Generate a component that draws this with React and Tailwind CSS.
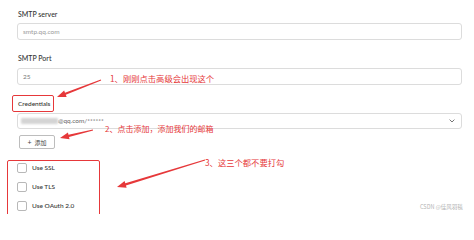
import React from "react";

function Arrow({ x1, y1, x2, y2 }) {
  const dx = x2 - x1;
  const dy = y2 - y1;
  const len = Math.sqrt(dx * dx + dy * dy);
  const ux = dx / len;
  const uy = dy / len;
  const px = -uy;
  const py = ux;
  const hl = 9;
  const hw = 3.5;
  const bx = x2 - ux * hl;
  const by = y2 - uy * hl;
  const tail = `${x1 + px * 0.5},${y1 + py * 0.5} ${bx + px * 1.1},${by + py * 1.1} ${bx + px * hw},${by + py * hw} ${x2},${y2} ${bx - px * hw},${by - py * hw} ${bx - px * 1.1},${by - py * 1.1} ${x1 - px * 0.5},${y1 - py * 0.5}`;
  return <polygon points={tail} fill="#e6383a" />;
}

export default function App() {
  return (
    <div className="relative w-[474px] h-[214px] overflow-hidden bg-white font-['Lato',sans-serif] text-[#333]">
      <div className="flex flex-col pl-[17px] pr-[12px] pt-[10px]">
        <div className="h-[8px] pl-[1px] text-[7px] leading-[8px] font-medium">SMTP server</div>
        <div className="mt-[5px] flex h-[17px] items-center rounded-[3px] border border-[#dcdcdc] pl-[5px] text-[6.5px] text-[#9a9a9a]">
          smtp.qq.com
        </div>
        <div className="mt-[14px] h-[8px] pl-[1px] text-[7px] leading-[8px] font-medium">SMTP Port</div>
        <div className="mt-[6px] flex h-[17px] items-center rounded-[3px] border border-[#dcdcdc] pl-[5px] text-[6.5px] text-[#777]">
          25
        </div>
        <div className="-ml-[5px] mt-[10px] flex h-[17px] w-[42px] items-center rounded-[2px] border-[1.5px] border-[#e6383a] pl-[5px] text-[6.5px] font-medium">
          Credentials
        </div>
        <div className="mt-[1px] flex h-[16px] items-center justify-between rounded-[3px] border border-[#dcdcdc] pl-[3px] pr-[6px] text-[6.5px] text-[#666]">
          <div className="flex items-center">
            <span className="h-[6px] w-[37px] rounded-[1px] bg-[#d4d4d4] blur-[1px]"></span>
            <span>@qq.com/******</span>
          </div>
          <svg width="6" height="4" viewBox="0 0 6 4">
            <path d="M0.6 0.6 L3 3 L5.4 0.6" fill="none" stroke="#666" strokeWidth="0.9" />
          </svg>
        </div>
        <div className="ml-[2px] mt-[6px] flex h-[14px] w-[36px] items-center justify-center gap-[3px] rounded-[2px] border border-[#bdbdbd] text-[6px] text-[#444]">
          <span className="text-[7px] leading-none">+</span>
          <span className="font-['Noto_Sans_CJK_SC',sans-serif]">添加</span>
        </div>
        <div className="-ml-[10px] mt-[11px] flex h-[60px] w-[93px] flex-col gap-[9px] rounded-[2px] border-[1.5px] border-[#e6383a] pl-[9px] pt-[1.5px]">
          {["Use SSL", "Use TLS", "Use OAuth 2.0"].map((t) => (
            <div key={t} className="flex h-[10px] items-center gap-[5px]">
              <span className="h-[10px] w-[10px] rounded-[2px] border border-[#b8b8b8] bg-white"></span>
              <span className="text-[6.5px] font-medium text-[#333]">{t}</span>
            </div>
          ))}
        </div>
      </div>

      <svg className="absolute left-0 top-0" width="474" height="214" viewBox="0 0 474 214">
        <Arrow x1={101} y1={80} x2={57} y2={97} />
        <Arrow x1={93} y1={130} x2={60} y2={138} />
        <Arrow x1={205} y1={160} x2={117} y2={187} />
      </svg>

      <div className="absolute left-[110px] top-[73px] text-[8.3px] leading-[10px] text-[#e6383a] font-['Noto_Sans_CJK_SC',sans-serif]">
        1、刚刚点击高级会出现这个
      </div>
      <div className="absolute left-[105px] top-[124px] text-[8px] leading-[10px] text-[#e6383a] font-['Noto_Sans_CJK_SC',sans-serif]">
        2、点击添加，添加我们的邮箱
      </div>
      <div className="absolute left-[205px] top-[157px] text-[8.3px] leading-[10px] text-[#e6383a] font-['Noto_Sans_CJK_SC',sans-serif]">
        3、这三个都不要打勾
      </div>
      <div className="absolute left-[420px] top-[204px] text-[5.5px] leading-[6px] text-[#b5b5b5] font-['Noto_Sans_CJK_SC',sans-serif]">
        CSDN @佳风羽毯
      </div>
    </div>
  );
}
